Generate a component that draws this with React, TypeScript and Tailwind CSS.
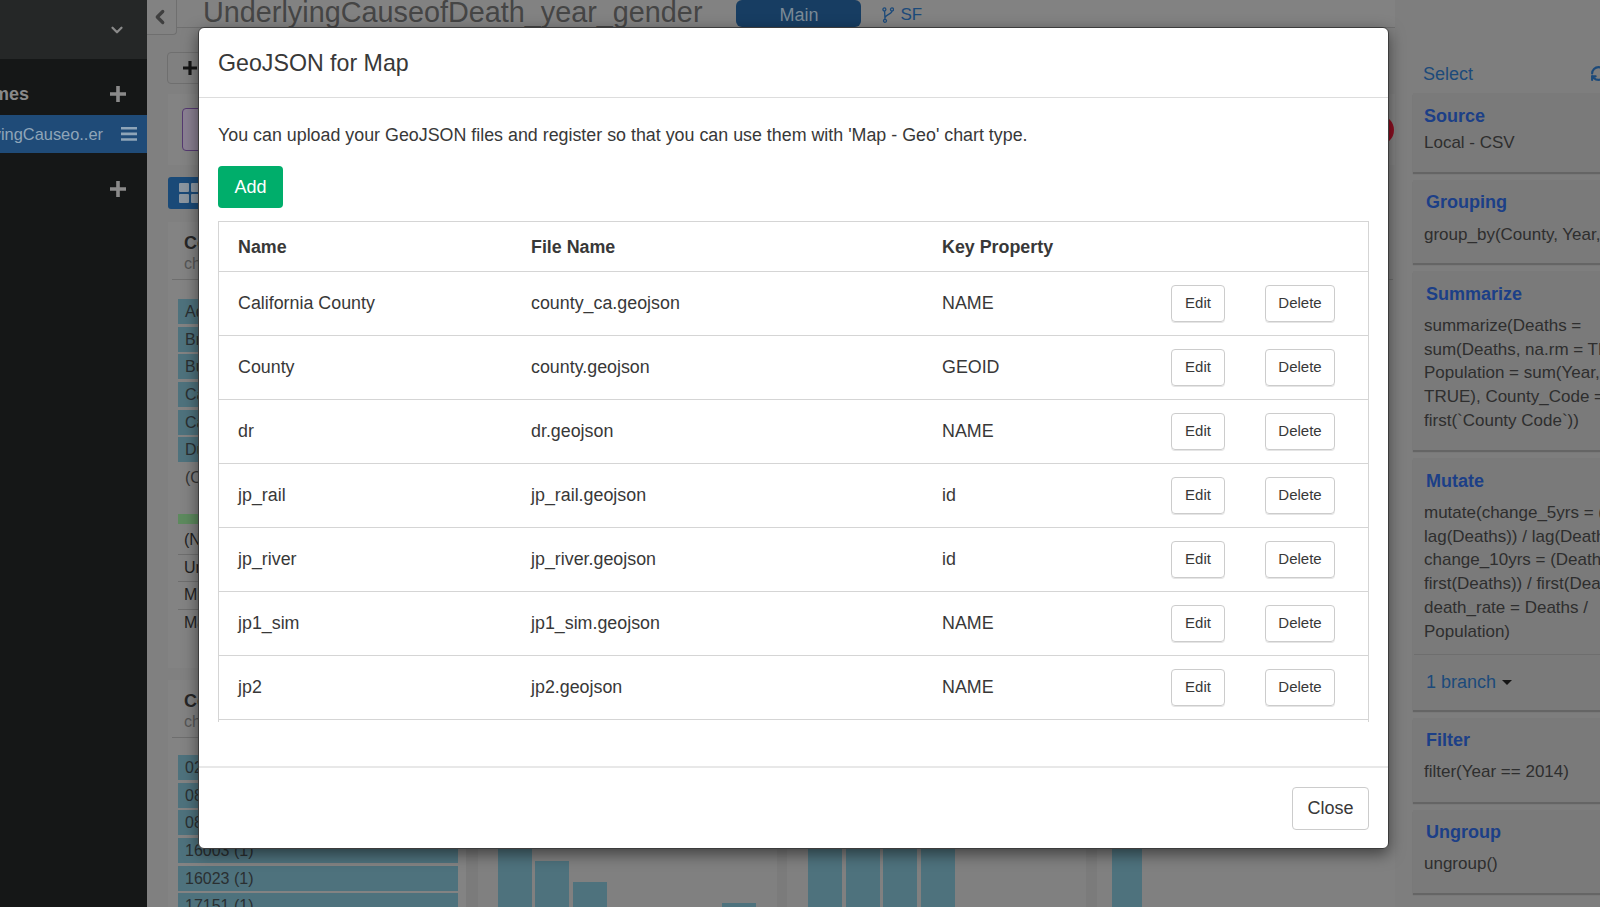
import { ChevronDown, ChevronLeft, RefreshCw } from "lucide-react";

const rows = [
  { name: "California County", file: "county_ca.geojson", key: "NAME" },
  { name: "County", file: "county.geojson", key: "GEOID" },
  { name: "dr", file: "dr.geojson", key: "NAME" },
  { name: "jp_rail", file: "jp_rail.geojson", key: "id" },
  { name: "jp_river", file: "jp_river.geojson", key: "id" },
  { name: "jp1_sim", file: "jp1_sim.geojson", key: "NAME" },
  { name: "jp2", file: "jp2.geojson", key: "NAME" },
];

const steps = [
  { title: "Source", lines: ["Local - CSV"], box: "h-[79px] pt-[11px]", head: "", gap: "mt-[4px]", body: "mt-[3px]" },
  { title: "Grouping", lines: ["group_by(County, Year, Gender)"], box: "h-[83px] pt-[10px]", head: "pl-[2px]", gap: "mt-[8px]", body: "mt-[9px]" },
  {
    title: "Summarize",
    lines: ["summarize(Deaths =", "sum(Deaths, na.rm = TRUE),", "Population = sum(Year, na.rm =", "TRUE), County_Code =", "first(`County Code`))"],
    box: "h-[179px] pt-[11px]",
    head: "pl-[2px]",
    gap: "mt-[8px]",
    body: "mt-[8px]",
  },
  {
    title: "Mutate",
    lines: ["mutate(change_5yrs = (Deaths -", "lag(Deaths)) / lag(Deaths),", "change_10yrs = (Deaths -", "first(Deaths)) / first(Deaths),", "death_rate = Deaths /", "Population)"],
    box: "h-[252px] pt-[11px]",
    head: "pl-[2px]",
    gap: "mt-[8px]",
    body: "mt-[8px]",
    branch: true,
  },
  { title: "Filter", lines: ["filter(Year == 2014)"], box: "h-[84px] pt-[10px]", head: "pl-[2px]", gap: "mt-[8px]", body: "mt-[8px]" },
  { title: "Ungroup", lines: ["ungroup()"], box: "h-[83px] pt-[10px]", head: "pl-[2px]", gap: "mt-[8px]", body: "mt-[8px]" },
];

const tealRows = ["Ad", "Br", "Bu", "Ca", "Ca", "Du"];
const countRows = ["(N", "Un", "Mi", "Ma"];
const codeRows = ["02", "08", "08", "16003 (1)", "16023 (1)", "17151 (1)"];
const histBars = ["h-[100px]", "h-[46px]", "h-[25px]", "h-0", "h-0", "h-0", "h-[4px]"];

const Plus = ({ className }: { className: string }) => (
  <svg viewBox="0 0 16 16" className={className} fill="currentColor">
    <path d="M6.2 0h3.6v6.2H16v3.6H9.8V16H6.2V9.8H0V6.2h6.2z" />
  </svg>
);

const CardHead = ({ title, sub }: { title: string; sub: string }) => (
  <div className="ml-[4px] mr-[2px] h-[58px] border-b border-[#6e6e6e] pl-[12px] pt-[10px]">
    <div className="text-[18px] font-bold leading-[22px] text-[#262626]">{title}</div>
    <div className="text-[16px] leading-[20px] text-[#555555]">{sub}</div>
  </div>
);

const Sidebar = () => (
  <div className="flex h-full w-[147px] shrink-0 flex-col overflow-hidden bg-[#151717] text-[#8a8a8a]">
    <div className="flex h-[59px] items-center justify-end bg-[#252727] pr-[21px]">
      <ChevronDown className="h-[18px] w-[18px]" strokeWidth={3} />
    </div>
    <div className="flex h-[56px] items-center justify-between pr-[21px] pt-[14px]">
      <div className="flex w-[29px] justify-end whitespace-nowrap text-[18px] font-bold">Data Frames</div>
      <Plus className="h-[16px] w-[16px]" />
    </div>
    <div className="flex h-[38px] items-center justify-between bg-[#1f4b78] pr-[10px] text-[#8fa5b8]">
      <div className="flex w-[103px] justify-end whitespace-nowrap text-[16.4px]">UnderlyingCauseo..er</div>
      <svg viewBox="0 0 16 14" className="h-[14px] w-[16px]" fill="currentColor">
        <path d="M0 0h16v2.6H0zM0 5.6h16v2.6H0zM0 11.2h16v2.6H0z" />
      </svg>
    </div>
    <div className="flex h-[71px] items-center justify-end pr-[21px]">
      <Plus className="h-[16px] w-[16px]" />
    </div>
  </div>
);

const Main = () => (
  <div className="flex h-full w-[1248px] shrink-0 flex-col">
    <div className="flex h-[28px] shrink-0 items-start border-b border-[#6f6f6f] bg-[#828282]">
      <div className="flex h-[35px] w-[30px] items-center justify-center rounded-br-[4px] border-r border-b border-[#6f6f6f] bg-[#828282] pr-[4px] text-[#3f3f3f]">
        <ChevronLeft className="h-[22px] w-[22px]" strokeWidth={3.5} />
      </div>
      <div className="ml-[26px] -mt-[5px] whitespace-nowrap text-[28.8px] leading-[34px] text-[#454545]">
        UnderlyingCauseofDeath_year_gender
      </div>
      <div className="ml-[34px] flex h-[27px] w-[125px] items-center justify-center rounded-[6px] bg-[#173d62] pt-[3px] text-[18px] text-[#7b8a96]">
        Main
      </div>
      <div className="ml-[21px] flex h-[27px] items-center gap-[6px] pt-[3px] text-[17px] text-[#1c4a7a]">
        <svg viewBox="0 0 12 16" className="h-[16px] w-[12px]" fill="none" stroke="currentColor" strokeWidth="1.3">
          <circle cx="2.4" cy="2.4" r="1.5" />
          <circle cx="10" cy="2.4" r="1.5" />
          <circle cx="3" cy="13.8" r="1.5" />
          <path d="M2.6 3.9 3 12.3M10 3.9C10 7 4 7.5 3 10.5" />
        </svg>
        SF
      </div>
    </div>
    <div className="ml-[20px] mt-[24px] flex h-[32px] w-[60px] shrink-0 items-center rounded-[4px] border border-[#6f6f6f] pl-[15px] text-[#151515]">
      <Plus className="h-[14px] w-[14px]" />
    </div>
    <div className="ml-[21px] mt-[10px] flex h-[71px] shrink-0 items-center bg-[#838383] pl-[14px]">
      <div className="h-[43px] w-[60px] rounded-[4px] border border-[#553a70] bg-[#8a8092]" />
    </div>
    <div className="ml-[21px] mt-[12px] flex h-[32px] w-[70px] shrink-0 items-center rounded-[3px] bg-[#1a4a78] pl-[11px]">
      <div className="grid grid-cols-2 gap-[2px]">
        <div className="h-[9px] w-[10px] rounded-[1px] bg-[#8b96a0]" />
        <div className="h-[9px] w-[10px] rounded-[1px] bg-[#8b96a0]" />
        <div className="h-[9px] w-[10px] rounded-[1px] bg-[#8b96a0]" />
        <div className="h-[9px] w-[10px] rounded-[1px] bg-[#8b96a0]" />
      </div>
    </div>
    <div className="ml-[21px] mt-[13px] grid h-[446px] shrink-0 grid-cols-[310px_309px_310px_298px]">
      <div className="bg-[#838383]">
        <CardHead title="Co" sub="ch" />
        <div className="mt-[19px] pl-[10px] pr-[20px]">
          {tealRows.map((label, i) => (
            <div key={i} className="mb-[2.7px] h-[25px] bg-[#4e727d] pl-[7px] text-[16px] leading-[25px] text-[#2a2f31]">
              {label}
            </div>
          ))}
          <div className="pl-[7px] text-[16px] leading-[25px] text-[#333333]">(O</div>
          <div className="mt-[24px] h-[10px] bg-[#5d8a5e]" />
          <div className="mt-[3px]">
            {countRows.map((label) => (
              <div key={label} className="h-[27.6px] border-b border-[#6e6e6e] pl-[6px] text-[16px] leading-[26px] text-[#1f1f1f] last:border-b-0">
                {label}
              </div>
            ))}
          </div>
        </div>
      </div>
      <div className="bg-[#808080]">
        <CardHead title="" sub="" />
      </div>
      <div className="bg-[#808080]">
        <CardHead title="" sub="" />
      </div>
      <div className="bg-[#808080]">
        <CardHead title="" sub="" />
      </div>
    </div>
    <div className="ml-[21px] mt-[12px] grid h-[227px] shrink-0 grid-cols-[310px_309px_310px_298px]">
      <div className="border-r-[12px] border-r-[#7b7b7b] bg-[#838383]">
        <CardHead title="Co" sub="ch" />
        <div className="mt-[17px] pl-[10px] pr-[8px]">
          {codeRows.map((label, i) => (
            <div key={i} className="mb-[2.7px] h-[25px] bg-[#4e727d] pl-[7px] text-[16px] leading-[25px] text-[#2a2f31]">
              {label}
            </div>
          ))}
        </div>
      </div>
      <div className="border-r-[10px] border-r-[#7b7b7b] pl-[20px] pt-[127px]">
        <div className="flex h-[100px] items-end gap-[3.4px]">
          {histBars.map((height, i) => (
            <div key={i} className={`w-[34px] bg-[#4e727d] ${height}`} />
          ))}
        </div>
      </div>
      <div className="border-r-[11px] border-r-[#7b7b7b] pl-[21px] pt-[127px]">
        <div className="flex h-[100px] gap-[3.5px]">
          <div className="w-[34px] bg-[#4e727d]" />
          <div className="w-[34px] bg-[#4e727d]" />
          <div className="w-[34px] bg-[#4e727d]" />
          <div className="w-[34px] bg-[#4e727d]" />
        </div>
      </div>
      <div className="pl-[15px] pt-[127px]">
        <div className="h-[100px] w-[30px] bg-[#4e727d]" />
      </div>
    </div>
  </div>
);

const Steps = () => (
  <div className="h-full w-[205px] shrink-0 bg-[#7e7e7e] pl-[18px]">
    <div className="flex h-[89px] w-[194px] items-end justify-between pl-[10px] pb-[3px] text-[#1c4a7a]">
      <span className="text-[18px] leading-[24px]">Select</span>
      <RefreshCw className="mb-[4px] h-[17px] w-[17px]" strokeWidth={3} />
    </div>
    {steps.map((step) => (
      <div key={step.title} className={`w-[260px] overflow-hidden bg-[#7a7a7a] pl-[11px] shadow-[0_2px_1px_#656565] ${step.box} ${step.gap}`}>
        <div className={`text-[18px] font-bold leading-[24px] text-[#1c3f87] ${step.head}`}>{step.title}</div>
        <div className={`whitespace-nowrap text-[17px] leading-[23.7px] text-[#2e2e2e] ${step.body}`}>
          {step.lines.map((line) => (
            <div key={line}>{line}</div>
          ))}
        </div>
        {step.branch && (
          <div className="-ml-[10px] mt-[11px] flex h-[56px] items-center gap-[6px] border-t border-[#6e6e6e] pl-[12px] text-[18px] text-[#1c4a7a]">
            1 branch
            <span className="h-0 w-0 border-x-[5px] border-t-[5px] border-x-transparent border-t-[#151515]" />
          </div>
        )}
      </div>
    ))}
  </div>
);

const MapDialog = () => (
  <div className="absolute left-[198px] top-[27px] flex h-[822px] w-[1191px] flex-col rounded-[6px] border border-[#3c3c3c] bg-white text-[#383838] shadow-[0_5px_15px_rgba(0,0,0,0.5)]">
    <div className="flex h-[70px] shrink-0 items-center border-b border-[#dddddd] pl-[19px] pt-[2px] text-[23.2px]">GeoJSON for Map</div>
    <div className="flex min-h-0 flex-1 flex-col px-[19px]">
      <p className="mt-[25px] text-[17.85px] leading-[24px]">
        You can upload your GeoJSON files and register so that you can use them with 'Map - Geo' chart type.
      </p>
      <button className="mt-[19px] h-[42px] w-[65px] rounded-[4px] bg-[#00ae6b] text-[18px] text-white">Add</button>
      <div className="mt-[13px] h-[501px] w-[1151px] overflow-hidden border-x border-t border-[#d5d5d5]">
        <table className="w-full table-fixed border-collapse text-[17.85px]">
          <colgroup>
            <col className="w-[292px]" />
            <col className="w-[411px]" />
            <col className="w-[229px]" />
            <col className="w-[95px]" />
            <col />
          </colgroup>
          <thead>
            <tr className="h-[49px] border-b border-[#d5d5d5] text-left">
              <th className="pl-[19px] pt-[2px] font-bold">Name</th>
              <th className="pl-[20px] pt-[2px] font-bold">File Name</th>
              <th className="pl-[20px] pt-[2px] font-bold">Key Property</th>
              <th />
              <th />
            </tr>
          </thead>
          <tbody>
            {rows.map((row) => (
              <tr key={row.name} className="h-[64px] border-b border-[#d5d5d5]">
                <td className="pl-[19px]">{row.name}</td>
                <td className="pl-[20px]">{row.file}</td>
                <td className="pl-[20px]">{row.key}</td>
                <td className="pl-[20px]">
                  <button className="h-[37px] w-[54px] rounded-[4px] border border-[#cccccc] text-[15px] shadow-[0_1px_0_#e5e5e5]">Edit</button>
                </td>
                <td className="pl-[20px]">
                  <button className="-ml-[1px] h-[37px] w-[70px] rounded-[4px] border border-[#cccccc] text-[15px] shadow-[0_1px_0_#e5e5e5]">Delete</button>
                </td>
              </tr>
            ))}
          </tbody>
        </table>
      </div>
    </div>
    <div className="flex h-[82px] shrink-0 items-center justify-end border-t-2 border-[#e8e8e8] pr-[19px]">
      <button className="h-[43px] w-[77px] rounded-[4px] border border-[#cccccc] text-[18px]">Close</button>
    </div>
  </div>
);

export default function App() {
  return (
    <div className="relative flex h-[907px] w-[1600px] overflow-hidden bg-[#808080] font-['Liberation_Sans',Arial,sans-serif]">
      <Sidebar />
      <Main />
      <Steps />
      <div className="absolute left-[1364px] top-[115px] h-[30px] w-[30px] rounded-full bg-[#8f0f22]" />
      <MapDialog />
    </div>
  );
}
